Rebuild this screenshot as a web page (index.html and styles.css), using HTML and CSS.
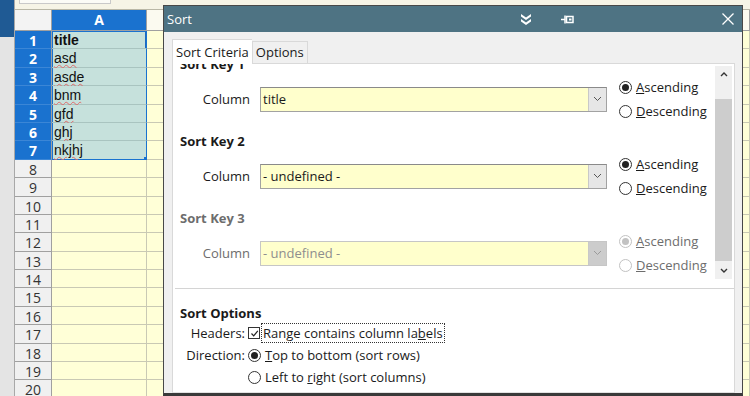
FILE: index.html
```html
<!DOCTYPE html>
<html lang="en">
<head>
    <meta charset="UTF-8">
    <title>Sort</title>
    <link rel="stylesheet" href="styles.css">
</head>
<body>

    <!-- spreadsheet behind the dialog -->
    <div class="sheet">
        <div class="edge"></div>
        <div class="sheet-main">
            <div class="toolbar"><span class="namebox"></span></div>
            <div class="grid">
                <div class="corner"></div>
                <div class="colhead sel">A</div>
                <div class="colhead"></div>

                <div class="rowhead sel">1</div><div class="cell a first"><b>title</b></div><div class="cell"></div>
                <div class="rowhead sel">2</div><div class="cell a"><span class="typo">asd</span></div><div class="cell"></div>
                <div class="rowhead sel">3</div><div class="cell a"><span class="typo">asde</span></div><div class="cell"></div>
                <div class="rowhead sel">4</div><div class="cell a"><span class="typo">bnm</span></div><div class="cell"></div>
                <div class="rowhead sel">5</div><div class="cell a"><span class="typo">gfd</span></div><div class="cell"></div>
                <div class="rowhead sel">6</div><div class="cell a"><span class="typo">ghj</span></div><div class="cell"></div>
                <div class="rowhead sel">7</div><div class="cell a last"><span class="typo">nkjhj</span></div><div class="cell"></div>
                <div class="rowhead">8</div><div class="cell"></div><div class="cell"></div>
                <div class="rowhead">9</div><div class="cell"></div><div class="cell"></div>
                <div class="rowhead">10</div><div class="cell"></div><div class="cell"></div>
                <div class="rowhead">11</div><div class="cell"></div><div class="cell"></div>
                <div class="rowhead">12</div><div class="cell"></div><div class="cell"></div>
                <div class="rowhead">13</div><div class="cell"></div><div class="cell"></div>
                <div class="rowhead">14</div><div class="cell"></div><div class="cell"></div>
                <div class="rowhead">15</div><div class="cell"></div><div class="cell"></div>
                <div class="rowhead">16</div><div class="cell"></div><div class="cell"></div>
                <div class="rowhead">17</div><div class="cell"></div><div class="cell"></div>
                <div class="rowhead">18</div><div class="cell"></div><div class="cell"></div>
                <div class="rowhead">19</div><div class="cell"></div><div class="cell"></div>
                <div class="rowhead">20</div><div class="cell"></div><div class="cell"></div>
            </div>
        </div>
    </div>

    <!-- Sort dialog -->
    <div class="dialog">
        <div class="titlebar">
            <span class="title">Sort</span>
            <svg class="ico-shade" width="10" height="11" viewBox="0 0 10 11">
                <path d="M0 0 L5 3.5 L10 0 L10 2.5 L5 6 L0 2.5 Z" fill="#fff"/>
                <path d="M0 5 L5 8.5 L10 5 L10 7.5 L5 11 L0 7.5 Z" fill="#fff"/>
            </svg>
            <svg class="ico-pin" width="13" height="9" viewBox="0 0 13 9">
                <path d="M0 4.5 H4" stroke="#fff" stroke-width="1.5"/>
                <path d="M4 0.5 V8.5" stroke="#fff" stroke-width="1.5"/>
                <rect x="5.5" y="1.5" width="6.5" height="6" fill="none" stroke="#fff" stroke-width="1.5"/>
                <path d="M8 3.5 H10.5 V5.5 H8 Z" fill="#fff"/>
            </svg>
            <svg class="ico-close" width="12" height="12" viewBox="0 0 12 12">
                <path d="M0.5 0.5 L11.5 11.5 M11.5 0.5 L0.5 11.5" stroke="#fff" stroke-width="1.3"/>
            </svg>
        </div>

        <div class="dlg-body">
            <div class="tabs">
                <div class="tab active">Sort Criteria</div>
                <div class="tab">Options</div>
            </div>

            <div class="panel">
                <div class="keys">
                    <div class="keys-view">
                        <div class="keys-inner">

                            <div class="key">
                                <div class="key-title">Sort Key 1</div>
                                <div class="key-row">
                                    <span class="lbl">Column</span>
                                    <div class="combo">
                                        <span class="combo-text">title</span>
                                        <span class="drop"><svg width="9" height="6" viewBox="0 0 9 6"><path d="M1 1 L4.5 4.5 L8 1" fill="none" stroke="#555" stroke-width="1"/></svg></span>
                                    </div>
                                    <div class="order">
                                        <div class="radio on"><i></i><span><u>A</u>scending</span></div>
                                        <div class="radio"><i></i><span><u>D</u>escending</span></div>
                                    </div>
                                </div>
                            </div>

                            <div class="key">
                                <div class="key-title">Sort Key 2</div>
                                <div class="key-row">
                                    <span class="lbl">Column</span>
                                    <div class="combo">
                                        <span class="combo-text">- undefined -</span>
                                        <span class="drop"><svg width="9" height="6" viewBox="0 0 9 6"><path d="M1 1 L4.5 4.5 L8 1" fill="none" stroke="#555" stroke-width="1"/></svg></span>
                                    </div>
                                    <div class="order">
                                        <div class="radio on"><i></i><span><u>A</u>scending</span></div>
                                        <div class="radio"><i></i><span><u>D</u>escending</span></div>
                                    </div>
                                </div>
                            </div>

                            <div class="key disabled">
                                <div class="key-title">Sort Key 3</div>
                                <div class="key-row">
                                    <span class="lbl">Column</span>
                                    <div class="combo">
                                        <span class="combo-text">- undefined -</span>
                                        <span class="drop"><svg width="9" height="6" viewBox="0 0 9 6"><path d="M1 1 L4.5 4.5 L8 1" fill="none" stroke="#9a9a9a" stroke-width="1"/></svg></span>
                                    </div>
                                    <div class="order">
                                        <div class="radio on"><i></i><span><u>A</u>scending</span></div>
                                        <div class="radio"><i></i><span><u>D</u>escending</span></div>
                                    </div>
                                </div>
                            </div>

                        </div>
                    </div>

                    <div class="scrollbar">
                        <span class="sb-btn"><svg width="8" height="5" viewBox="0 0 8 5"><path d="M1 4 L4 1 L7 4" fill="none" stroke="#333" stroke-width="1.4"/></svg></span>
                        <span class="sb-track"><span class="sb-thumb"></span></span>
                        <span class="sb-btn"><svg width="8" height="5" viewBox="0 0 8 5"><path d="M1 1 L4 4 L7 1" fill="none" stroke="#333" stroke-width="1.4"/></svg></span>
                    </div>
                </div>

                <div class="separator"></div>

                <div class="options">
                    <div class="key-title">Sort Options</div>
                    <div class="opt-grid">
                        <span class="opt-lbl">Headers:</span>
                        <div class="check">
                            <i><svg width="9" height="9" viewBox="0 0 9 9"><path d="M1.5 4.5 L3.7 6.8 L7.8 1.8" fill="none" stroke="#222" stroke-width="1.2"/></svg></i>
                            <span class="focus">Range contains column la<u>b</u>els</span>
                        </div>

                        <span class="opt-lbl">Direction:</span>
                        <div class="radio on"><i></i><span><u>T</u>op to bottom (sort rows)</span></div>

                        <span></span>
                        <div class="radio"><i></i><span>Left to <u>r</u>ight (sort columns)</span></div>
                    </div>
                </div>
            </div>
        </div>
    </div>

</body>
</html>
```

FILE: styles.css
```css
* {
    box-sizing: border-box;
}
body {
    margin: 0;
    width: 750px;
    height: 396px;
    overflow: hidden;
    position: relative;
    background: #ffffd7;
    font-family: "Open Sans", "Noto Sans", sans-serif;
}

/* Spreadsheet */
.sheet {
    display: flex;
    height: 396px;
    overflow: hidden;
}
.edge {
    width: 15px;
    flex: none;
    background: linear-gradient(#1f5a94 0, #1f5a94 37px, #e4e4e4 37px);
    border-right: 1px solid #a8a8a8;
}
.sheet-main {
    flex: 1;
    display: flex;
    flex-direction: column;
}
.toolbar {
    height: 10px;
    flex: none;
    background: #f6f4e6;
    border-bottom: 1px solid #b9b7a6;
    padding-left: 4px;
}
.namebox {
    display: block;
    width: 92px;
    height: 4px;
    border: 1px solid #c9c9c9;
    border-top: none;
    background: #fbfbf6;
}
.grid {
    display: grid;
    grid-template-columns: 37px 95px 1fr;
    grid-template-rows: 21px repeat(20, 18.4px);
    font-family: "Liberation Sans", Arial, sans-serif;
    font-size: 14px;
}
.corner {
    background: #f3f3f3;
    border-right: 1px solid #a0a0a0;
    border-bottom: 1px solid #a0a0a0;
}
.colhead {
    background: #fbfaf0;
    border-bottom: 1px solid #a0a0a0;
    border-right: 1px solid #a0a0a0;
}
.colhead.sel {
    background: #1a72cf;
    color: #fff;
    font-weight: bold;
    font-family: "Open Sans", sans-serif;
    text-align: center;
    line-height: 20px;
    font-size: 14px;
}
.rowhead {
    background: #f0f0f0;
    color: #333;
    border-right: 1px solid #a0a0a0;
    border-bottom: 1px solid #a0a0a0;
    text-align: center;
    font-family: "Open Sans", sans-serif;
    font-size: 14px;
    line-height: 19px;
    overflow: hidden;
}
.rowhead.sel {
    background: #1a72cf;
    color: #fff;
    font-weight: bold;
    border-bottom-color: #3b86d6;
}
.cell {
    background: #ffffd7;
    border-right: 1px solid #c9c9b4;
    border-bottom: 1px solid #c9c9b4;
    padding-left: 2px;
    line-height: 18px;
    color: #111;
    position: relative;
}
.cell.a {
    background: #c6e1dc;
    border-bottom-color: #a9c4c0;
    border-right-color: #1a72cf;
    box-shadow: inset 1px 0 #1a72cf;
}
.cell.first {
    box-shadow: inset 1px 0 #1a72cf, inset 0 1px #1a72cf, inset -1px 0 #1e6ac0;
}
.cell.last {
    border-bottom-color: #1a72cf;
}
.cell.last::after {
    content: "";
    position: absolute;
    right: -3px;
    bottom: -3px;
    width: 5px;
    height: 5px;
    background: #1a72cf;
}
.typo {
    text-decoration: underline wavy #e06a6a;
    text-decoration-thickness: 1px;
    text-underline-offset: 1px;
}

/* Dialog */
.dialog {
    position: absolute;
    left: 163px;
    top: 5px;
    width: 580px;
    height: 391px;
    background: #f0f0f0;
    border: 1px solid #484848;
    border-bottom: 3px solid #3a3a3a;
    display: flex;
    flex-direction: column;
    font-size: 13px;
    color: #1a1a1a;
}
.titlebar {
    height: 26px;
    flex: none;
    background: #4e7383;
    color: #fff;
    display: flex;
    align-items: center;
    padding: 0 8px 0 3px;
}
.title {
    font-size: 13px;
    margin-right: auto;
}
.ico-shade {
    margin-top: 1px;
}
.ico-pin {
    margin-left: 30px;
    margin-right: 148px;
}

.dlg-body {
    flex: 1;
    display: flex;
    flex-direction: column;
    padding: 7px 7px 0 8px;
}
.tabs {
    display: flex;
    align-items: flex-end;
    height: 24px;
    position: relative;
    z-index: 1;
}
.tab {
    height: 22px;
    padding: 0 3px;
    line-height: 21px;
    border: 1px solid #d9d9d9;
    border-bottom: none;
    background: #f0f0f0;
}
.tab.active {
    height: 25px;
    margin-bottom: -1px;
    background: #fff;
    line-height: 25px;
    border-right: none;
}
.panel {
    flex: 1;
    background: #fff;
    border: 1px solid #d9d9d9;
    border-bottom-color: #e2e2e2;
    display: flex;
    flex-direction: column;
}

.keys {
    height: 217px;
    display: flex;
    flex: none;
}
.keys-view {
    flex: 1;
    overflow: hidden;
    padding-left: 7px;
}
.keys-inner {
    margin-top: -11px;
}
.key {
    margin-bottom: 7px;
}
.key-title {
    font-weight: bold;
    height: 22px;
    line-height: 22px;
}
.key-row {
    height: 48px;
    display: flex;
    align-items: center;
}
.lbl {
    width: 70px;
    text-align: right;
    margin-right: 10px;
}
.combo {
    width: 347px;
    height: 25px;
    margin-right: 12px;
    background: #ffffcc;
    border: 1px solid #a2a2a2;
    border-top-color: #8a8a8a;
    display: flex;
}
.combo-text {
    flex: 1;
    padding-left: 2px;
    line-height: 22px;
}
.drop {
    width: 18px;
    background: #e6e6e6;
    border-left: 1px solid #c8c8c8;
    display: flex;
    align-items: center;
    justify-content: center;
}
.order {
    display: flex;
    flex-direction: column;
}
.radio {
    display: flex;
    align-items: center;
    height: 24px;
}
.radio i {
    width: 13px;
    height: 13px;
    border: 1px solid #333;
    border-radius: 50%;
    margin-right: 4px;
    display: flex;
    align-items: center;
    justify-content: center;
    background: #fff;
}
.radio.on i::after {
    content: "";
    width: 7px;
    height: 7px;
    border-radius: 50%;
    background: #222;
}
.key.disabled {
    color: #6d6d6d;
}
.key.disabled .combo {
    border-color: #c6c6c6;
    color: #8e8e8e;
}
.key.disabled .drop {
    background: #cccccc;
}
.key.disabled .radio i {
    border-color: #c2c2c2;
}
.key.disabled .radio.on i::after {
    background: #c2c2c2;
}

.scrollbar {
    width: 17px;
    margin: 2px 2px 2px 0;
    background: #f0f0f0;
    display: flex;
    flex-direction: column;
}
.sb-btn {
    height: 17px;
    display: flex;
    align-items: center;
    justify-content: center;
}
.sb-track {
    flex: 1;
    padding: 16px 0 1px;
    display: flex;
}
.sb-thumb {
    flex: 1;
    background: #cdcdcd;
}

.separator {
    height: 1px;
    margin: 7px 0 0 2px;
    background: #d4d4d4;
}

.options {
    padding: 15px 0 0 7px;
}
.options .key-title {
    height: 18px;
    line-height: 18px;
}
.opt-grid {
    display: grid;
    grid-template-columns: 65px auto;
    grid-auto-rows: 22px;
    column-gap: 3px;
    align-items: center;
}
.opt-lbl {
    text-align: right;
}
.check {
    display: flex;
    align-items: center;
}
.check i {
    width: 12px;
    height: 12px;
    border: 1px solid #333;
    margin-right: 2px;
    display: flex;
    align-items: center;
    justify-content: center;
}
.focus {
    outline: 1px dotted #333;
    padding: 0 1px;
    line-height: 18px;
}
.opt-grid .radio {
    height: 22px;
}
```
